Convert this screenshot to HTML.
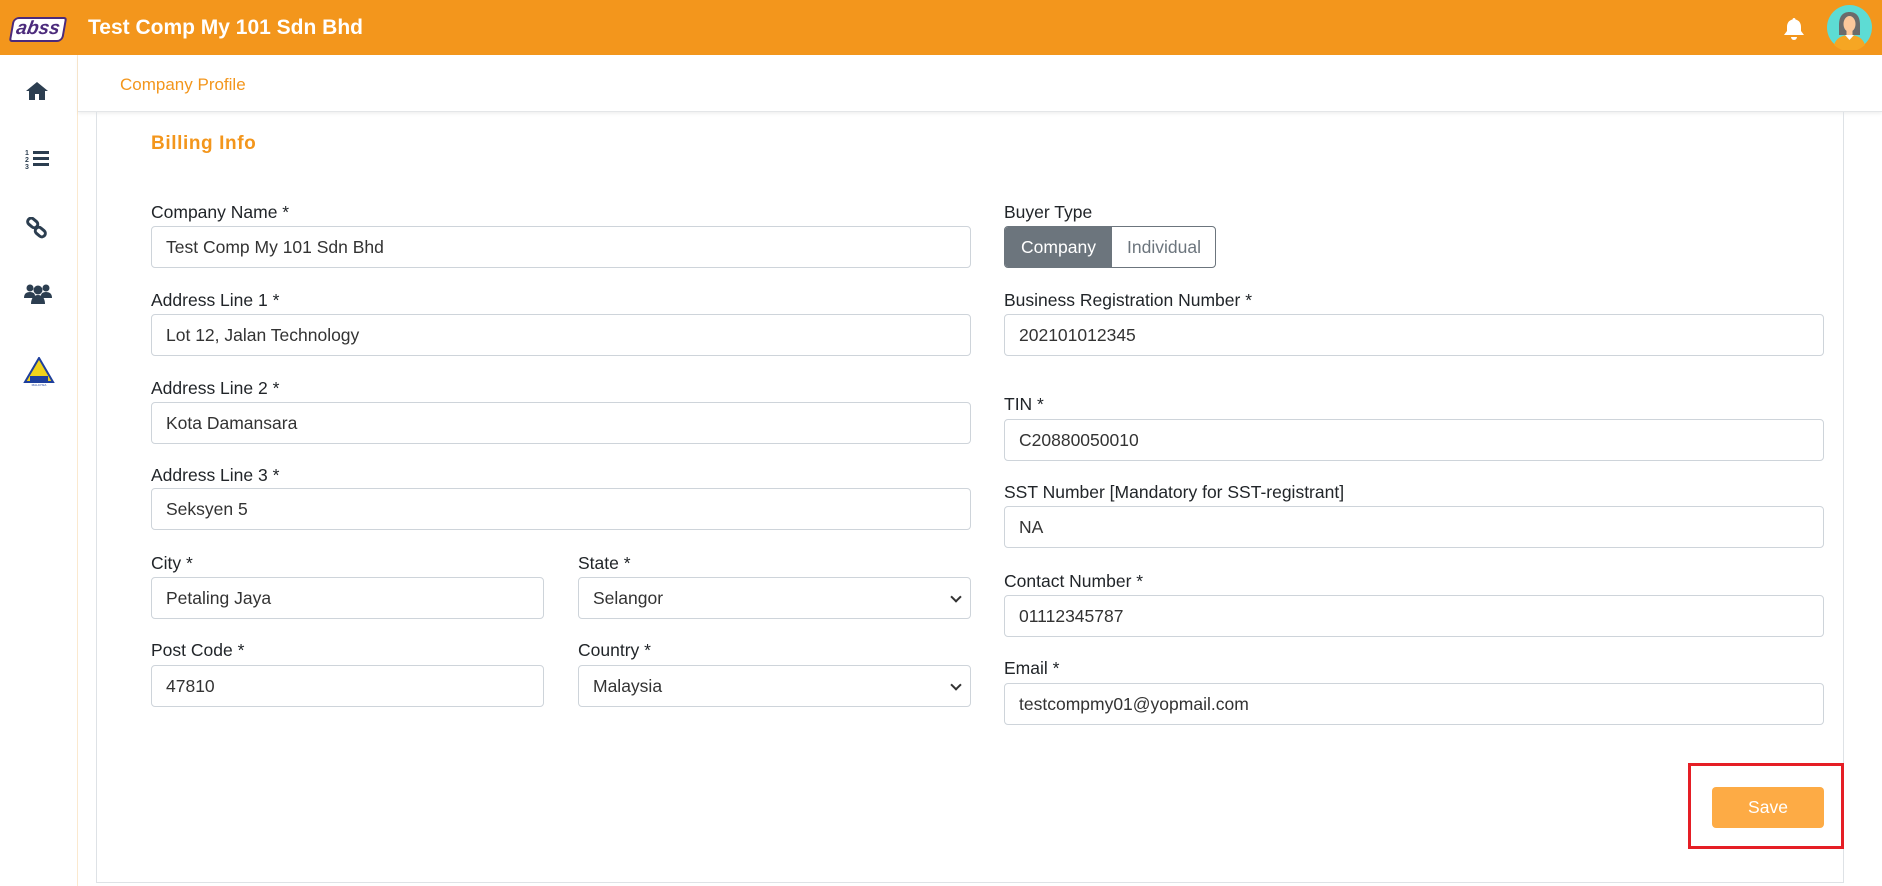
<!DOCTYPE html>
<html><head><meta charset="utf-8"><style>
*{box-sizing:border-box;margin:0;padding:0}
body{width:1882px;height:886px;overflow:hidden;background:#fff;font-family:"Liberation Sans",Arial,sans-serif;color:#212529;position:relative}
.hdr{position:absolute;left:0;top:0;width:1882px;height:55px;background:#f3961c}
.logo{position:absolute;left:11px;top:17px;width:54px;height:25px;background:#fff;border:2px solid #4b2a7b;border-radius:6px 3px 6px 3px;transform:skewX(-10deg);color:#4b2a7b;font-weight:bold;font-style:italic;font-size:19px;line-height:20px;text-align:center}
.title{position:absolute;left:88px;top:16px;color:#fff;font-weight:bold;font-size:21px}
.side{position:absolute;left:0;top:55px;width:78px;height:831px;border-right:1px solid #fbe9cf;background:#fff}
.crumb{position:absolute;left:78px;top:55px;width:1804px;height:57px;border-bottom:1px solid #e4e6e8;box-shadow:0 2px 3px rgba(0,0,0,.06)}
.crumb span{position:absolute;left:42px;top:20px;color:#f3961c;font-size:17px}
.card{position:absolute;left:96px;top:112px;width:1748px;height:771px;border:1px solid #dee2e6;border-top:none}
.bi{position:absolute;left:151px;top:133px;color:#f3961c;font-weight:bold;font-size:19px;letter-spacing:0.6px}
.lbl{position:absolute;font-size:17.5px;color:#212529}
.inp{position:absolute;height:42px;border:1px solid #ced4da;border-radius:4px;font-size:17.5px;color:#333;padding:11px 14px;line-height:19px}
.sel::after{content:"";position:absolute;right:10px;top:15px;width:6px;height:6px;border-right:2px solid #333;border-bottom:2px solid #333;transform:rotate(45deg)}
.tog{position:absolute;left:1004px;top:226px;height:42px;width:212px;border:1px solid #6c757d;border-radius:4px;overflow:hidden;font-size:17.5px}
.tog div{position:absolute;top:0;height:40px;line-height:40px;text-align:center}
.save{position:absolute;left:1712px;top:787px;width:112px;height:41px;background:#fdab45;border-radius:4px;color:#fff;font-size:17.5px;text-align:center;line-height:41px}
.red{position:absolute;left:1688px;top:763px;width:156px;height:86px;border:3px solid #e51e25}
</style></head><body>
<div class="hdr">
<div class="logo">abss</div>
<div class="title">Test Comp My 101 Sdn Bhd</div>
<svg style="position:absolute;left:1783px;top:17px" width="22" height="24" viewBox="0 0 22 24"><path d="M11 1c1 0 1.5.7 1.5 1.5C16 3.3 18 6 18 10v4l3 4H1l3-4v-4c0-4 2-6.7 5.5-7.5C9.5 1.7 10 1 11 1z" fill="#fff"/><path d="M8 20h6a3 3 0 0 1-6 0z" fill="#fff"/></svg>
<svg style="position:absolute;left:1827px;top:5px" width="45" height="45" viewBox="0 0 45 45"><circle cx="22.5" cy="22.5" r="22.5" fill="#5ddcd4"/><path d="M12 20c0-9 4-13 10.5-13S33 11 33 20v10H12z" fill="#6b6b6b"/><ellipse cx="22.5" cy="19" rx="6" ry="8" fill="#fcc89b"/><rect x="19.5" y="25" width="6" height="6" fill="#fcc89b"/><path d="M7 40c2-7 8-10 15.5-10S36 33 38 40a22.5 22.5 0 0 1-31 0z" fill="#f6a623"/><path d="M18 30l4.5 5 4.5-5" fill="#fff"/></svg>
</div>
<div class="side">
<svg style="position:absolute;left:25px;top:26px" width="24" height="20" viewBox="0 0 24 20"><path d="M12 1L1 10h3v9h6v-6h4v6h6v-9h3z" fill="#2c3e50"/></svg>
<svg style="position:absolute;left:25px;top:93px" width="25" height="22" viewBox="0 0 25 22"><text x="0" y="7" font-size="7" font-family="Liberation Sans" font-weight="bold" fill="#2c3e50">1</text><text x="0" y="14" font-size="7" font-family="Liberation Sans" font-weight="bold" fill="#2c3e50">2</text><text x="0" y="21" font-size="7" font-family="Liberation Sans" font-weight="bold" fill="#2c3e50">3</text><rect x="8" y="3" width="16" height="3" fill="#2c3e50"/><rect x="8" y="9" width="16" height="3" fill="#2c3e50"/><rect x="8" y="15" width="16" height="3" fill="#2c3e50"/></svg>
<svg style="position:absolute;left:26px;top:162px" width="22" height="22" viewBox="0 0 22 22"><rect x="1" y="2" width="11" height="7" rx="3.5" transform="rotate(40 6 6)" fill="none" stroke="#2c3e50" stroke-width="3"/><rect x="9" y="12" width="11" height="7" rx="3.5" transform="rotate(40 15 15)" fill="none" stroke="#2c3e50" stroke-width="3"/></svg>
<svg style="position:absolute;left:24px;top:228px" width="28" height="22" viewBox="0 0 28 22"><circle cx="6" cy="5" r="3.5" fill="#2c3e50"/><circle cx="22" cy="5" r="3.5" fill="#2c3e50"/><circle cx="14" cy="7" r="4.5" fill="#2c3e50"/><path d="M0 15c0-4 2-6 6-6s5 2 5 4v2z M17 13c0-2 1-4 5-4s6 2 6 6H17z" fill="#2c3e50"/><path d="M7 21c0-6 3-9 7-9s7 3 7 9z" fill="#2c3e50"/></svg>
<svg style="position:absolute;left:22px;top:302px" width="34" height="30" viewBox="0 0 34 30"><path d="M17 1L3 25h28z" fill="#f0d21b" stroke="#1e3f9c" stroke-width="2"/><rect x="8" y="19" width="18" height="6" fill="#1e3f9c"/><text x="17" y="29" font-size="3" text-anchor="middle" fill="#1e3f9c" font-family="Liberation Sans">MALAYSIA</text></svg>
</div>
<div class="crumb"><span>Company Profile</span></div>
<div class="card"></div>
<div class="bi">Billing Info</div>

<div class="lbl" style="left:151px;top:202px">Company Name *</div>
<div class="inp" style="left:151px;top:226px;width:820px">Test Comp My 101 Sdn Bhd</div>
<div class="lbl" style="left:151px;top:290px">Address Line 1 *</div>
<div class="inp" style="left:151px;top:314px;width:820px">Lot 12, Jalan Technology</div>
<div class="lbl" style="left:151px;top:378px">Address Line 2 *</div>
<div class="inp" style="left:151px;top:402px;width:820px">Kota Damansara</div>
<div class="lbl" style="left:151px;top:465px">Address Line 3 *</div>
<div class="inp" style="left:151px;top:488px;width:820px">Seksyen 5</div>
<div class="lbl" style="left:151px;top:553px">City *</div>
<div class="inp" style="left:151px;top:577px;width:393px">Petaling Jaya</div>
<div class="lbl" style="left:578px;top:553px">State *</div>
<div class="inp sel" style="left:578px;top:577px;width:393px">Selangor</div>
<div class="lbl" style="left:151px;top:640px">Post Code *</div>
<div class="inp" style="left:151px;top:665px;width:393px">47810</div>
<div class="lbl" style="left:578px;top:640px">Country *</div>
<div class="inp sel" style="left:578px;top:665px;width:393px">Malaysia</div>

<div class="lbl" style="left:1004px;top:202px">Buyer Type</div>
<div class="tog"><div style="left:0;width:107px;background:#6c757d;color:#fff">Company</div><div style="left:107px;width:104px;color:#6c757d">Individual</div></div>
<div class="lbl" style="left:1004px;top:290px">Business Registration Number *</div>
<div class="inp" style="left:1004px;top:314px;width:820px">202101012345</div>
<div class="lbl" style="left:1004px;top:394px">TIN *</div>
<div class="inp" style="left:1004px;top:419px;width:820px">C20880050010</div>
<div class="lbl" style="left:1004px;top:482px">SST Number [Mandatory for SST-registrant]</div>
<div class="inp" style="left:1004px;top:506px;width:820px">NA</div>
<div class="lbl" style="left:1004px;top:571px">Contact Number *</div>
<div class="inp" style="left:1004px;top:595px;width:820px">01112345787</div>
<div class="lbl" style="left:1004px;top:658px">Email *</div>
<div class="inp" style="left:1004px;top:683px;width:820px">testcompmy01@yopmail.com</div>

<div class="red"></div>
<div class="save">Save</div>
</body></html>
